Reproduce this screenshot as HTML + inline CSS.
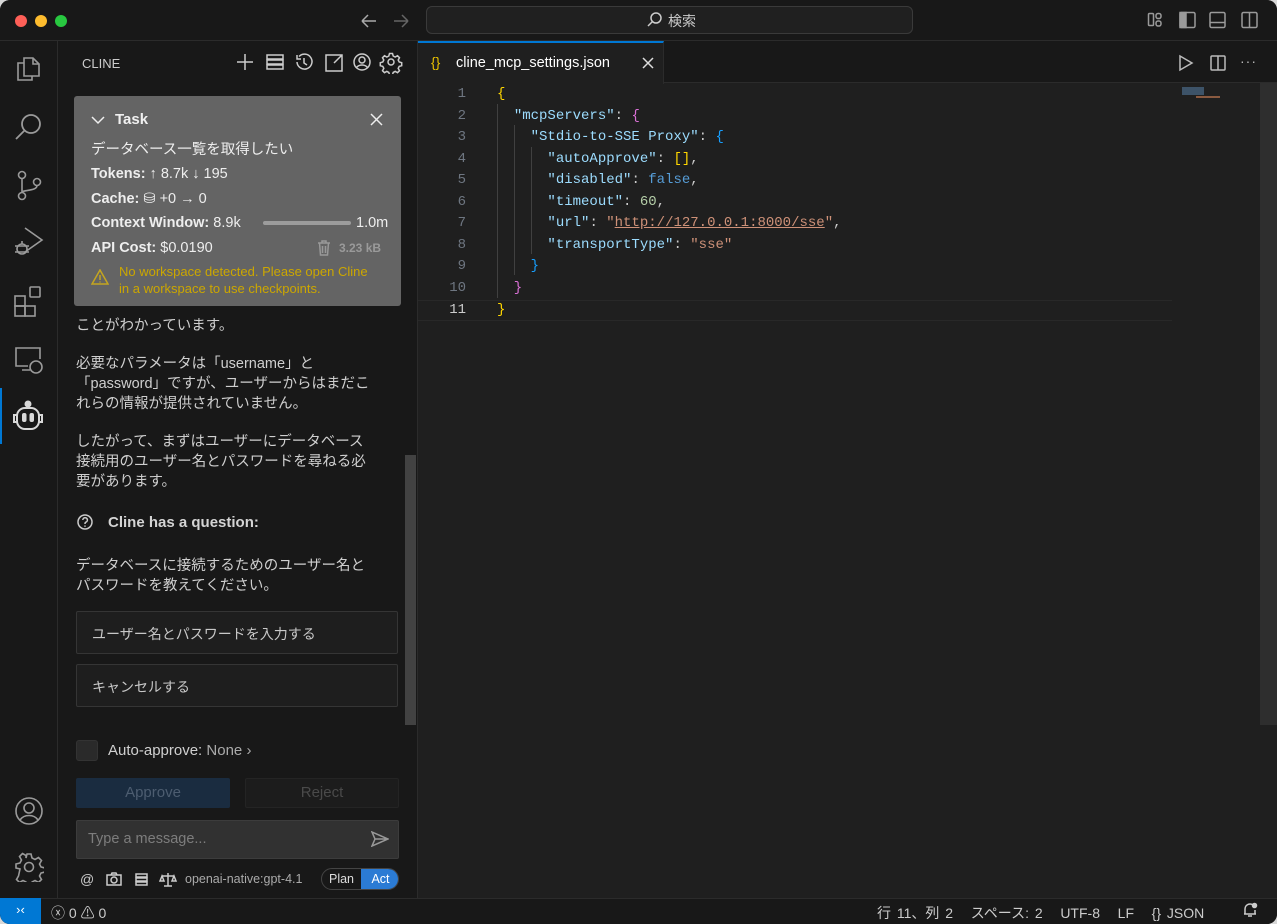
<!DOCTYPE html><html><head><meta charset="utf-8"><style>
*{box-sizing:border-box;margin:0;padding:0}
body{width:1277px;height:924px;background:#d8d8d8;overflow:hidden;font-family:"Liberation Sans","Noto Sans CJK JP",sans-serif;color:#ccc;font-size:14px}
#win{position:absolute;left:0;top:0;width:1277px;height:924px;background:#181818;border-radius:10px;overflow:hidden}
.a{position:absolute}
.ico{position:absolute;stroke:#9a9a9a;fill:none;stroke-width:1.5}
.mono{font-family:"Liberation Mono",monospace;font-size:14px}
.ln{position:absolute;left:430px;width:36px;text-align:right;color:#6e7681}
.cl{position:absolute;left:497px;white-space:pre}
.k{color:#9cdcfe}.s{color:#ce9178}.y{color:#ffd700}.p{color:#da70d6}.b{color:#179fff}.n{color:#b5cea8}.f{color:#569cd6}.w{color:#ccc}
.t{position:absolute;left:76px;font-size:14.5px;color:#cfcfcf;line-height:20px}
</style></head><body><div id="win">
<div class="a" style="left:0;top:0;width:1277px;height:41px;background:#181818;border-bottom:1px solid #2b2b2b"></div>
<div class="a" style="left:15px;top:15px;width:12px;height:12px;border-radius:6px;background:#fe5f57"></div>
<div class="a" style="left:35px;top:15px;width:12px;height:12px;border-radius:6px;background:#febc2e"></div>
<div class="a" style="left:55px;top:15px;width:12px;height:12px;border-radius:6px;background:#28c840"></div>
<svg class="ico" style="left:360px;top:12px" width="60" height="18"><path d="M2 9h14M2 9l6-6M2 9l6 6" stroke="#aaa"/><path d="M34 9h14M48 9l-6-6M48 9l-6 6" stroke="#666"/></svg>
<div class="a" style="left:426px;top:6px;width:487px;height:28px;background:#202020;border:1px solid #3a3a3a;border-radius:6px"></div>
<svg class="ico" style="left:646px;top:11px" width="18" height="18"><circle cx="10" cy="7" r="5" stroke="#ccc"/><path d="M6.5 10.5L2 15" stroke="#ccc"/></svg>
<div class="a" style="left:668px;top:11px;font-size:14px;color:#ccc">検索</div>
<svg class="ico" style="left:1147px;top:11px" width="120" height="18"><rect x="1.5" y="2.5" width="5" height="12" rx="1"/><rect x="9" y="2.5" width="5" height="5" rx="2"/><rect x="9" y="10" width="5" height="5" rx="2"/><rect x="33" y="1.5" width="15" height="15" rx="1.5"/><rect x="33" y="1.5" width="6" height="15" fill="#9a9a9a"/><rect x="63" y="1.5" width="15" height="15" rx="1.5"/><path d="M63 11.5h15"/><rect x="95" y="1.5" width="15" height="15" rx="1.5"/><path d="M102.5 1.5v15"/></svg>
<div class="a" style="left:57px;top:41px;width:1px;height:857px;background:#2b2b2b"></div>
<svg class="ico" style="left:14px;top:54px;stroke-width:1.6" width="30" height="30"><path d="M10 4h9l6 6v12h-15z"/><path d="M19 4v6h6"/><path d="M10 9H4v17h14v-4"/></svg>
<svg class="ico" style="left:14px;top:112px;stroke-width:1.8" width="30" height="30"><circle cx="17" cy="12" r="9"/><path d="M10.5 18.5L2 27"/></svg>
<svg class="ico" style="left:14px;top:170px;stroke-width:1.6" width="30" height="32"><circle cx="8" cy="5" r="3.5"/><circle cx="8" cy="26" r="3.5"/><circle cx="23" cy="12" r="3.5"/><path d="M8 8.5v14M23 15.5c0 6-15 4-15 7"/></svg>
<svg class="ico" style="left:12px;top:226px;stroke-width:1.6" width="34" height="32"><path d="M13 2l17 12-17 12"/><circle cx="10" cy="23" r="5"/><path d="M3 20h14M3 26h14M10 18v-3"/></svg>
<svg class="ico" style="left:14px;top:286px;stroke-width:1.6" width="32" height="32"><rect x="1" y="10" width="10" height="10"/><rect x="1" y="20" width="10" height="10"/><rect x="11" y="20" width="10" height="10"/><rect x="16" y="1" width="10" height="10" rx="1"/></svg>
<svg class="ico" style="left:14px;top:345px;stroke-width:1.6" width="32" height="30"><path d="M26 14V3H2v18h12M8 25h8"/><circle cx="22" cy="22" r="6"/></svg>
<div class="a" style="left:0;top:388px;width:2px;height:56px;background:#0078d4"></div>
<svg class="ico" style="left:12px;top:400px;stroke:#d8d8d8;stroke-width:2" width="34" height="34"><circle cx="16" cy="4" r="2.5" fill="#d8d8d8"/><rect x="5" y="8" width="22" height="21" rx="8"/><path d="M5 15H2v7h3M27 15h3v7h-3"/><rect x="11" y="14" width="2.5" height="7" rx="1" fill="#d8d8d8"/><rect x="18.5" y="14" width="2.5" height="7" rx="1" fill="#d8d8d8"/></svg>
<svg class="ico" style="left:14px;top:796px;stroke-width:1.6" width="30" height="30"><circle cx="15" cy="15" r="13"/><circle cx="15" cy="12" r="5"/><path d="M6 24c4-6 14-6 18 0"/></svg>
<svg class="ico" style="left:14px;top:852px;stroke-width:1.6" width="30" height="30"><circle cx="15" cy="15" r="4.5"/><path d="M13 2h4l1 4 3 1.5 3.5-2 3 3-2 3.5 1.5 3 4 1v4l-4 1-1.5 3 2 3.5-3 3-3.5-2-3 1.5-1 4h-4l-1-4-3-1.5-3.5 2-3-3 2-3.5L6 17l-4-1v-4l4-1 1.5-3-2-3.5 3-3 3.5 2L12 6z"/></svg>
<div class="a" style="left:417px;top:41px;width:1px;height:857px;background:#2b2b2b"></div>
<div class="a" style="left:82px;top:56px;font-size:13px;color:#ccc">CLINE</div>
<svg class="ico" style="left:235px;top:52px;stroke:#ccc" width="170" height="22"><path d="M10 2v16M2 10h16"/><rect x="32" y="3" width="16" height="4"/><rect x="32" y="8" width="16" height="4"/><rect x="32" y="13" width="16" height="4"/><path d="M62 10a7.5 7.5 0 1 0 2-5.5M62 3v4h4M69 6v5l3 2"/><path d="M104 3H91v16h16V6M99 11l8-8M102 3h5v5"/><circle cx="127" cy="10" r="8"/><circle cx="127" cy="8" r="3"/><path d="M121 16c3-4 9-4 12 0"/><circle cx="156" cy="10" r="3"/><path d="M154.5 1.5h3l.7 2.5 2 1 2.3-1.3 2 2-1.3 2.3 1 2 2.5.7v3l-2.5.7-1 2 1.3 2.3-2 2-2.3-1.3-2 1-.7 2.5h-3l-.7-2.5-2-1-2.3 1.3-2-2 1.3-2.3-1-2-2.5-.7v-3l2.5-.7 1-2-1.3-2.3 2-2 2.3 1.3 2-1z"/></svg>
<div class="a" style="left:74px;top:96px;width:327px;height:210px;background:#646464;border-radius:3px"></div>
<svg class="ico" style="left:90px;top:113px;stroke:#eee" width="16" height="14"><path d="M2 4l6 6 6-6"/></svg>
<div class="a" style="left:115px;top:111px;font-size:15px;font-weight:bold;color:#f0f0f0">Task</div>
<svg class="ico" style="left:370px;top:113px;stroke:#eee" width="14" height="14"><path d="M1 1l11 11M12 1L1 12"/></svg>
<div class="a" style="left:91px;top:138px;font-size:14.5px;color:#eee">データベース一覧を取得したい</div>
<div class="a" style="left:91px;top:166px;font-size:14.5px;color:#eee"><b>Tokens:</b> ↑ 8.7k ↓ 195</div>
<div class="a" style="left:91px;top:191px;font-size:14.5px;color:#eee"><b>Cache:</b> ⛁ +0 → 0</div>
<div class="a" style="left:91px;top:215px;font-size:14.5px;color:#eee"><b>Context Window:</b> 8.9k</div>
<div class="a" style="left:263px;top:221px;width:88px;height:4px;background:#9c9c9c;border-radius:2px"></div>
<div class="a" style="left:356px;top:215px;font-size:14.5px;color:#eee">1.0m</div>
<div class="a" style="left:91px;top:240px;font-size:14.5px;color:#eee"><b>API Cost:</b> $0.0190</div>
<svg class="ico" style="left:317px;top:240px;stroke:#999" width="14" height="16"><path d="M1 3h12M5 3V1h4v2M2.5 3l1 12h7l1-12M5.5 6v7M8.5 6v7"/></svg>
<div class="a" style="left:339px;top:241px;font-size:12px;font-weight:bold;color:#9a9a9a">3.23 kB</div>
<svg class="ico" style="left:91px;top:269px;stroke:#c4a520" width="18" height="16"><path d="M9 1L1 15h16z M9 6v5M9 12.5v1"/></svg>
<div class="a" style="left:119px;top:264px;font-size:13px;color:#cca700;line-height:16.5px">No workspace detected. Please open Cline<br>in a workspace to use checkpoints.</div>
<div class="t" style="top:316px">ことがわかっています。</div>
<div class="t" style="top:354px">必要なパラメータは「username」と<br>「password」ですが、ユーザーからはまだこ<br>れらの情報が提供されていません。</div>
<div class="t" style="top:432px">したがって、まずはユーザーにデータベース<br>接続用のユーザー名とパスワードを尋ねる必<br>要があります。</div>
<svg class="ico" style="left:77px;top:514px;stroke:#ccc" width="18" height="18"><circle cx="8" cy="8" r="7"/><path d="M5.8 6a2.3 2.3 0 1 1 3 2.2c-.8.3-.8 1-.8 1.8M8 11.5v1.3"/></svg>
<div class="a" style="left:108px;top:514px;font-size:15px;font-weight:bold;color:#d4d4d4">Cline has a question:</div>
<div class="t" style="top:556px">データベースに接続するためのユーザー名と<br>パスワードを教えてください。</div>
<div class="a" style="left:76px;top:611px;width:322px;height:43px;background:#1e1e1e;border:1px solid #353535;border-radius:2px;padding:12px 15px;font-size:14px;color:#c8c8c8">ユーザー名とパスワードを入力する</div>
<div class="a" style="left:76px;top:664px;width:322px;height:43px;background:#1e1e1e;border:1px solid #353535;border-radius:2px;padding:12px 15px;font-size:14px;color:#c8c8c8">キャンセルする</div>
<div class="a" style="left:405px;top:455px;width:11px;height:270px;background:#424242"></div>
<div class="a" style="left:76px;top:740px;width:22px;height:21px;background:#2a2a2a;border:1px solid #333;border-radius:3px"></div>
<div class="a" style="left:108px;top:742px;font-size:15px;color:#d0d0d0">Auto-approve: <span style="color:#aaa">None</span> <span style="color:#aaa">›</span></div>
<div class="a" style="left:76px;top:778px;width:154px;height:30px;background:#1a2c40;border-radius:2px;text-align:center;line-height:30px;font-size:15px;color:#4d5d70">Approve</div>
<div class="a" style="left:245px;top:778px;width:154px;height:30px;background:#1c1c1c;border:1px solid #242424;border-radius:2px;text-align:center;line-height:28px;font-size:15px;color:#4a4a4a">Reject</div>
<div class="a" style="left:76px;top:820px;width:323px;height:39px;background:#313131;border:1px solid #3c3c3c;border-radius:2px;padding:10px 11px;font-size:14.5px;color:#7d7d7d">Type a message...</div>
<svg class="ico" style="left:371px;top:831px;stroke:#999" width="18" height="16"><path d="M1 1l16 7-16 7 3-7z M4 8h13"/></svg>
<div class="a" style="left:80px;top:871px;font-size:14px;color:#ccc">@</div>
<svg class="ico" style="left:106px;top:872px;stroke:#ccc" width="80" height="16"><rect x="1" y="3" width="14" height="10"/><circle cx="8" cy="8" r="3"/><path d="M5 3l1-2h4l1 2"/><rect x="30" y="2" width="11" height="3"/><rect x="30" y="6" width="11" height="3"/><rect x="30" y="10" width="11" height="3"/><path d="M62 1v13M58 14h8M56 4h12M56 4l-2 5h4zM68 4l-2 5h4z"/></svg>
<div class="a" style="left:185px;top:872px;font-size:12.5px;color:#aaa">openai-native:gpt-4.1</div>
<div class="a" style="left:321px;top:868px;width:78px;height:22px;border:1px solid #444;border-radius:11px;overflow:hidden;font-size:12.5px"><span class="a" style="left:0;top:0;width:39px;height:20px;line-height:20px;text-align:center;color:#ddd">Plan</span><span class="a" style="left:39px;top:0;width:39px;height:20px;line-height:20px;text-align:center;background:#2b7bd4;color:#fff">Act</span></div>
<div class="a" style="left:418px;top:41px;width:859px;height:857px;background:#1f1f1f"></div>
<div class="a" style="left:418px;top:41px;width:859px;height:42px;background:#181818;border-bottom:1px solid #2b2b2b"></div>
<div class="a" style="left:418px;top:41px;width:246px;height:43px;background:#1f1f1f;border-top:2px solid #0078d4;border-right:1px solid #2b2b2b"></div>
<div class="a" style="left:431px;top:54px;font-size:14px;color:#e8c000">{}</div>
<div class="a" style="left:456px;top:55px;font-size:14.5px;color:#fff">cline_mcp_settings.json</div>
<svg class="ico" style="left:642px;top:57px;stroke:#ddd" width="12" height="12"><path d="M1 1l10 10M11 1L1 11"/></svg>
<svg class="ico" style="left:1178px;top:54px;stroke:#bbb" width="90" height="18"><path d="M2 2l12 7-12 7z"/><rect x="33" y="2" width="14" height="14" rx="1"/><path d="M40 2v14"/></svg>
<div class="a" style="left:1240px;top:53px;font-size:14px;color:#bbb;letter-spacing:1px">···</div>
<div class="a" style="left:418px;top:300px;width:754px;height:21px;border-top:1px solid #282828;border-bottom:1px solid #282828"></div>
<div class="a" style="left:497px;top:104px;width:1px;height:194px;background:#404040"></div>
<div class="a" style="left:514px;top:125px;width:1px;height:150px;background:#404040"></div>
<div class="a" style="left:531px;top:147px;width:1px;height:107px;background:#404040"></div>
<div class="mono">
<div class="ln" style="top:86px">1</div><div class="ln" style="top:108px">2</div><div class="ln" style="top:129px">3</div><div class="ln" style="top:151px">4</div><div class="ln" style="top:172px">5</div><div class="ln" style="top:194px">6</div><div class="ln" style="top:215px">7</div><div class="ln" style="top:237px">8</div><div class="ln" style="top:258px">9</div><div class="ln" style="top:280px">10</div><div class="ln" style="top:302px;color:#ccc">11</div>
<div class="cl y" style="top:86px">{</div>
<div class="cl" style="top:108px">  <span class="k">"mcpServers"</span><span class="w">: </span><span class="p">{</span></div>
<div class="cl" style="top:129px">    <span class="k">"Stdio-to-SSE Proxy"</span><span class="w">: </span><span class="b">{</span></div>
<div class="cl" style="top:151px">      <span class="k">"autoApprove"</span><span class="w">: </span><span class="y">[]</span><span class="w">,</span></div>
<div class="cl" style="top:172px">      <span class="k">"disabled"</span><span class="w">: </span><span class="f">false</span><span class="w">,</span></div>
<div class="cl" style="top:194px">      <span class="k">"timeout"</span><span class="w">: </span><span class="n">60</span><span class="w">,</span></div>
<div class="cl" style="top:215px">      <span class="k">"url"</span><span class="w">: </span><span class="s">"<u>http://127.0.0.1:8000/sse</u>"</span><span class="w">,</span></div>
<div class="cl" style="top:237px">      <span class="k">"transportType"</span><span class="w">: </span><span class="s">"sse"</span></div>
<div class="cl b" style="top:258px">    }</div>
<div class="cl p" style="top:280px">  }</div>
<div class="cl y" style="top:302px">}</div>
</div>
<div class="a" style="left:1182px;top:87px;width:22px;height:8px;background:#4a6a88;opacity:.7"></div>
<div class="a" style="left:1196px;top:96px;width:24px;height:2px;background:#8a5a40"></div>
<div class="a" style="left:1260px;top:83px;width:17px;height:642px;background:#2e2e2e"></div>
<div class="a" style="left:0;top:898px;width:1277px;height:26px;background:#181818;border-top:1px solid #2b2b2b"></div>
<div class="a" style="left:0;top:898px;width:41px;height:26px;background:#0078d4;color:#fff;font-size:13px;text-align:center;line-height:24px">›‹</div>
<div class="a" style="left:51px;top:903px;font-size:14px;color:#ccc">ⓧ 0 ⚠ 0</div>
<div class="a" style="left:877px;top:903px;font-size:14px;color:#ccc;word-spacing:2px">行 11、列 2 &nbsp;&nbsp;スペース: 2 &nbsp;&nbsp;UTF-8 &nbsp;&nbsp;LF &nbsp;&nbsp;{} JSON</div>
<svg class="ico" style="left:1242px;top:902px;stroke:#ccc" width="16" height="16"><path d="M3 12V7a5 5 0 0 1 9-3M2 12h12M6 14h4M13 8v4"/><circle cx="12.5" cy="3.5" r="2" fill="#ccc"/></svg>
</div></body></html>
